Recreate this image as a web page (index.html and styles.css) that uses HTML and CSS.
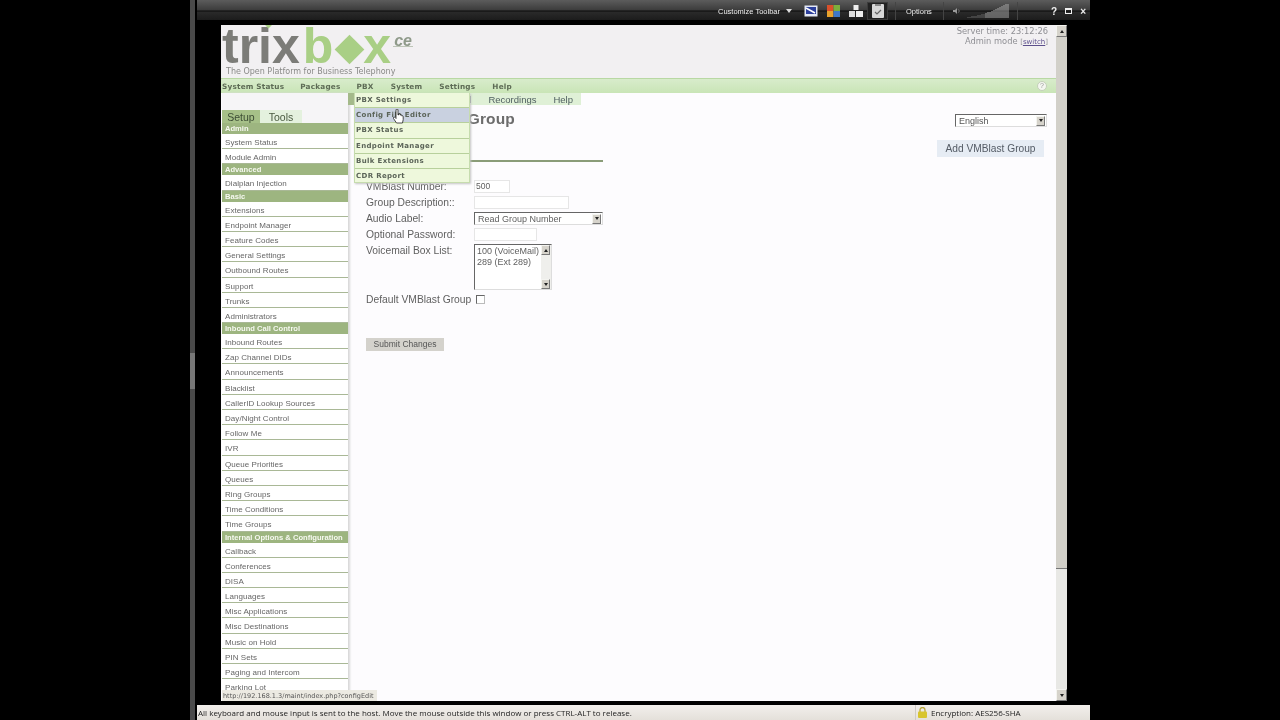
FILE: index.html
```html
<!DOCTYPE html>
<html lang="en">
  <head>
    <meta charset="UTF-8" />
    <title>trixbox CE - VMBlast Group</title>
    <link rel="stylesheet" href="styles.css">
  </head>
  <body>
    <div class="screen">
      <div class="edge"><div class="edge-grip"></div></div>

      <div class="window">
        <div class="toolbar">
          <span class="toolbar-label">Customize Toolbar</span>
          <span class="toolbar-caret"></span>
          <svg class="tool-icon tool-display" width="14" height="12" viewBox="0 0 14 12">
            <rect x="0.5" y="0.5" width="13" height="11" fill="#e4e8f4"></rect>
            <rect x="2" y="2" width="10" height="7" fill="#2c3f9c"></rect>
            <path d="M2 3l9 5" stroke="#fff" stroke-width="1.5"></path>
          </svg>
          <svg class="tool-icon tool-colors" width="13" height="12" viewBox="0 0 13 12">
            <rect width="6.5" height="6" fill="#d9502b"></rect>
            <rect x="6.5" width="6.5" height="6" fill="#7cae3c"></rect>
            <rect y="6" width="6.5" height="6" fill="#e8a22c"></rect>
            <rect x="6.5" y="6" width="6.5" height="6" fill="#3f78c8"></rect>
          </svg>
          <svg class="tool-icon tool-network" width="14" height="12" viewBox="0 0 14 12">
            <rect x="4.5" y="0" width="5" height="5" fill="#eee"></rect>
            <rect x="0" y="6" width="6" height="6" fill="#ddd"></rect>
            <rect x="7" y="6" width="7" height="6" fill="#eee"></rect>
          </svg>
          <span class="tool-box">
            <svg width="12" height="14" viewBox="0 0 12 14">
              <rect width="12" height="14" rx="1" fill="#d8d8d8"></rect>
              <rect x="3" y="0" width="6" height="2" fill="#888"></rect>
              <path d="M3 8l2 2 4-4" fill="none" stroke="#666" stroke-width="1.2"></path>
            </svg>
          </span>
          <span class="toolbar-sep sep-options"></span>
          <span class="toolbar-label label-options">Options</span>
          <span class="toolbar-sep sep-volume"></span>
          <svg class="tool-icon tool-speaker" width="8" height="6" viewBox="0 0 8 6">
            <path d="M0 2h2l2-2v6L2 4H0z" fill="#999"></path>
            <path d="M5.5 1.5q1.5 1.5 0 3" fill="none" stroke="#777"></path>
          </svg>
          <svg class="tool-icon tool-volume" width="42" height="14" viewBox="0 0 42 14">
            <path d="M1 14v-1M3 14v-1M5 14v-2M7 14v-2M9 14v-2M11 14v-3M13 14v-3M15 14v-4M17 14v-4" stroke="#666"></path>
            <path d="M19 14v-5M21 14v-6M23 14v-6M25 14v-7M27 14v-8M29 14v-9M31 14v-10M33 14v-11M35 14v-12M37 14v-13M39 14v-14M41 14v-14" stroke="#a8a8a8"></path>
          </svg>
          <span class="toolbar-sep sep-window"></span>
          <span class="window-buttons">
            <span class="window-help">?</span>
            <span class="window-max"></span>
            <span class="window-close">×</span>
          </span>
        </div>

        <div class="viewport">
          <div class="page">
            <div class="page-main">
              <div class="page-header">
                <div class="brand">
                  <div class="logo">
                    <span class="logo-grey">tri<span class="logo-dot"></span>x</span><span class="logo-green">b<span class="logo-diamond"></span>x</span><span class="logo-ce">ce</span>
                  </div>
                  <div class="tagline">The Open Platform for Business Telephony</div>
                </div>
                <div class="server-info">
                  <div>Server time: 23:12:26</div>
                  <div>Admin mode <span class="switch-wrap">[<a class="switch">switch</a>]</span></div>
                </div>
              </div>

              <div class="nav">
                <span class="nav-item">System Status</span>
                <span class="nav-item">Packages</span>
                <span class="nav-item">PBX</span>
                <span class="nav-item nav-item-wide">System</span>
                <span class="nav-item nav-item-wide">Settings</span>
                <span class="nav-item nav-item-wide">Help</span>
                <span class="nav-help">?</span>
              </div>

              <div class="page-body">
                <div class="sidebar">
                  <div class="tabs">
                    <span class="tab tab-active">Setup</span>
                    <span class="tab">Tools</span>
                  </div>
                  <div class="side-head">Admin</div>
                  <div class="side-item">System Status</div>
                  <div class="side-item">Module Admin</div>
                  <div class="side-head">Advanced</div>
                  <div class="side-item">Dialplan Injection</div>
                  <div class="side-head">Basic</div>
                  <div class="side-item">Extensions</div>
                  <div class="side-item">Endpoint Manager</div>
                  <div class="side-item">Feature Codes</div>
                  <div class="side-item">General Settings</div>
                  <div class="side-item">Outbound Routes</div>
                  <div class="side-item">Support</div>
                  <div class="side-item">Trunks</div>
                  <div class="side-item">Administrators</div>
                  <div class="side-head">Inbound Call Control</div>
                  <div class="side-item">Inbound Routes</div>
                  <div class="side-item">Zap Channel DIDs</div>
                  <div class="side-item">Announcements</div>
                  <div class="side-item">Blacklist</div>
                  <div class="side-item">CallerID Lookup Sources</div>
                  <div class="side-item">Day/Night Control</div>
                  <div class="side-item">Follow Me</div>
                  <div class="side-item">IVR</div>
                  <div class="side-item">Queue Priorities</div>
                  <div class="side-item">Queues</div>
                  <div class="side-item">Ring Groups</div>
                  <div class="side-item">Time Conditions</div>
                  <div class="side-item">Time Groups</div>
                  <div class="side-head">Internal Options &amp; Configuration</div>
                  <div class="side-item">Callback</div>
                  <div class="side-item">Conferences</div>
                  <div class="side-item">DISA</div>
                  <div class="side-item">Languages</div>
                  <div class="side-item">Misc Applications</div>
                  <div class="side-item">Misc Destinations</div>
                  <div class="side-item">Music on Hold</div>
                  <div class="side-item">PIN Sets</div>
                  <div class="side-item">Paging and Intercom</div>
                  <div class="side-item">Parking Lot</div>
                </div>

                <div class="content">
                  <div class="subnav">
                    <span>Operator Panel</span>
                    <span>Recordings</span>
                    <span>Help</span>
                  </div>
                  <div class="content-row">
                    <div class="form-col">
                      <h2 class="form-title">Add VMBlast Group</h2>
                      <div class="form-rule"></div>
                      <div class="form-grid">
                        <label>VMBlast Number:</label>
                        <div class="field field-number">500</div>
                        <label>Group Description::</label>
                        <div class="field field-desc"></div>
                        <label>Audio Label:</label>
                        <div class="select select-audio">
                          <span>Read Group Number</span>
                          <span class="arrow-btn arrow-down"></span>
                        </div>
                        <label>Optional Password:</label>
                        <div class="field field-pass"></div>
                        <label>Voicemail Box List:</label>
                        <div class="listbox">
                          <div class="listbox-items">
                            <div>100 (VoiceMail)</div>
                            <div>289 (Ext 289)</div>
                          </div>
                          <div class="listbox-scroll">
                            <span class="arrow-btn arrow-up"></span>
                            <span class="arrow-btn arrow-down"></span>
                          </div>
                        </div>
                        <label>Default VMBlast Group</label>
                        <div class="checkbox"></div>
                      </div>
                      <button class="submit-button">Submit Changes</button>
                    </div>
                    <div class="side-col">
                      <div class="select select-lang">
                        <span>English</span>
                        <span class="arrow-btn arrow-down"></span>
                      </div>
                      <div class="add-button">Add VMBlast Group</div>
                    </div>
                  </div>
                </div>
              </div>

              <div class="menu">
                <div class="menu-item">PBX Settings</div>
                <div class="menu-item menu-hover">Config File Editor</div>
                <div class="menu-item">PBX Status</div>
                <div class="menu-item">Endpoint Manager</div>
                <div class="menu-item">Bulk Extensions</div>
                <div class="menu-item">CDR Report</div>
              </div>

              <svg class="hand-cursor" width="11" height="15" viewBox="0 0 11 15">
                <path d="M3 1a1 1 0 0 1 2 0v5h.5V5a1 1 0 0 1 1.5 0v1h.3a1 1 0 0 1 1.5.3V7a.9.9 0 0 1 1.4.6v3L9.500 14H3.500L.5 9.500q-.5-1.500 1-1.500L3 9.500z" fill="#fff" stroke="#222" stroke-width="0.8"></path>
              </svg>

              <div class="link-tip">http://192.168.1.3/maint/index.php?configEdit</div>
            </div>

            <div class="scrollbar">
              <span class="arrow-btn arrow-up scroll-end"></span>
              <div class="scroll-thumb"></div>
              <div class="scroll-track"></div>
              <span class="arrow-btn arrow-down scroll-end"></span>
            </div>
          </div>
        </div>

        <div class="statusbar">
          <span class="status-text">All keyboard and mouse input is sent to the host. Move the mouse outside this window or press CTRL-ALT to release.</span>
          <span class="status-secure">
            <svg width="9" height="11" viewBox="0 0 9 11">
              <path d="M2 5V3a2.500 2.500 0 0 1 5 0v2" fill="none" stroke="#b9a83a" stroke-width="1.300"></path>
              <rect y="4.500" width="9" height="6.500" rx="1" fill="#d8c52e"></rect>
            </svg>
            Encryption: AES256-SHA
          </span>
        </div>
      </div>
    </div>
  </body>
</html>
```

FILE: styles.css
```css
:root {
  --green-dark: #9db580;
  --green-line: #a9b896;
  --green-light: #dff0d6;
  --text-grey: #5f5f5f;
  --page-bg: #fdfcfe;
  --scroll-face: #d6d3cb;
}

* {
  margin: 0;
  padding: 0;
  box-sizing: border-box;
}

body {
  background-color: #000;
  font-family: "Liberation Sans", Arial, sans-serif;
  color: var(--text-grey);
  overflow: hidden;
}

.screen {
  width: 900px;
  height: 720px;
  margin-left: 190px;
  display: flex;
  filter: blur(0.35px);
}

.edge {
  width: 7px;
  flex-shrink: 0;
  display: flex;
  align-items: center;
  padding-right: 2px;
  background-color: #000;
}

.edge-grip {
  width: 5px;
  height: 720px;
  background: linear-gradient(#4a4a4a 0, #4a4a4a 49%, #777 49%, #777 54%, #4a4a4a 54%);
}

.window {
  flex: 1;
  min-width: 0;
  display: flex;
  flex-direction: column;
}

/* Top toolbar */
.toolbar {
  height: 20px;
  flex-shrink: 0;
  display: flex;
  align-items: center;
  background: linear-gradient(#5c5c5c 0, #3c3c3c 10px, #0a0a0a 11px, #2a2a2a 12px, #1c1c1c 20px);
  padding-left: 521px;
  padding-top: 2px;
  color: #eee;
  position: relative;
}

.toolbar-label {
  width: 62px;
  font-family: "Liberation Sans", sans-serif;
  font-size: 7.500px;
  white-space: nowrap;
}

.toolbar-caret {
  margin-left: 6px;
  border-left: 3px solid transparent;
  border-right: 3px solid transparent;
  border-top: 4px solid #ddd;
}

.tool-display { margin-left: 12px; }
.tool-colors { margin-left: 9px; }
.tool-network { margin-left: 9px; }

.tool-box {
  margin-left: 4px;
  width: 21px;
  height: 18px;
  display: flex;
  align-items: center;
  justify-content: center;
  background-color: #222;
  border: 1px solid #3c3c3c;
}

.toolbar-sep {
  width: 1px;
  height: 18px;
  background-color: #444;
}

.sep-options { margin-left: 7px; }
.toolbar-label.label-options { margin-left: 10px; width: 26px; }
.sep-volume { margin-left: 11px; }
.tool-speaker { margin-left: 9px; }
.tool-volume { margin-left: 6px; }
.sep-window { margin-left: 8px; }

.window-buttons {
  margin-left: auto;
  margin-right: 4px;
  display: flex;
  align-items: center;
  gap: 8px;
  font-size: 10px;
  font-weight: 700;
}

.window-max {
  width: 7px;
  height: 6px;
  border: 1px solid #eee;
  border-top-width: 2px;
}

/* Remote desktop area */
.viewport {
  flex: 1;
  min-height: 0;
  padding: 5px 23px 4px 24px;
  background-color: #000;
}

.page {
  height: 100%;
  display: flex;
}

.page-main {
  flex: 1;
  min-width: 0;
  position: relative;
  overflow: hidden;
  display: flex;
  flex-direction: column;
  background-color: var(--page-bg);
}

.page-header {
  height: 53px;
  flex-shrink: 0;
  display: flex;
  justify-content: space-between;
  background-color: #f2f0f2;
  padding: 0 8px 0 1px;
}

.logo {
  height: 42px;
  padding-top: 1px;
  font-size: 50px;
  line-height: 41px;
  font-weight: 700;
  white-space: nowrap;
}

.logo-grey {
  color: #7c7c78;
  position: relative;
}

.logo-dot {
  position: absolute;
  left: 43px;
  top: 2px;
  width: 7px;
  height: 7px;
  background-color: #a9cf85;
  transform: rotate(45deg);
}

.logo-green {
  color: #a9cf85;
  margin-left: 3px;
}

.logo-diamond {
  display: inline-block;
  width: 21px;
  height: 21px;
  margin: 0 3px 3px 6px;
  background-color: #a9cf85;
  transform: rotate(45deg);
}

.logo-ce {
  display: inline-block;
  vertical-align: 17px;
  margin-left: 2px;
  padding: 0 1px;
  font-size: 16px;
  line-height: 10px;
  font-style: italic;
  color: #8f9a8a;
  border-bottom: 1px solid #bcc4b6;
}

.tagline {
  margin: 0 0 0 4px;
  font-family: "DejaVu Sans", sans-serif;
  font-size: 8px;
  line-height: 10px;
  color: #8a8a88;
  white-space: nowrap;
}

.server-info {
  padding-top: 2px;
  text-align: right;
  font-family: "DejaVu Sans", sans-serif;
  font-size: 8.300px;
  line-height: 9.500px;
  color: #8f8f94;
}

.switch-wrap {
  font-size: 7px;
}

.switch {
  color: #5c4f8c;
  text-decoration: underline;
}

/* Main menu */
.nav {
  height: 15px;
  flex-shrink: 0;
  display: flex;
  align-items: center;
  gap: 16px;
  padding: 0 9px 0 1px;
  background: linear-gradient(#d8eccb, #c9e5b6);
  border-top: 1px solid #b9d8a4;
}

.nav-item {
  font-family: "DejaVu Sans", sans-serif;
  font-size: 7.300px;
  font-weight: 700;
  letter-spacing: 0.2px;
  color: #5d6b55;
  white-space: nowrap;
}

.nav-item-wide {
  margin-left: 1px;
}

.nav-help {
  margin-left: auto;
  width: 10px;
  height: 10px;
  border-radius: 50%;
  background-color: #f4f6f0;
  border: 1px solid #c4d0ba;
  font-size: 7px;
  line-height: 8px;
  text-align: center;
  color: #999;
}

.page-body {
  flex: 1;
  min-height: 0;
  display: flex;
}

/* Left module list */
.sidebar {
  width: 126px;
  margin-left: 1px;
  flex-shrink: 0;
  padding-top: 17px;
  background-color: #f6f5f7;
  box-shadow: 2px 0 2px #d8d8d8;
}

.tabs {
  display: flex;
  height: 13px;
  font-size: 10.500px;
  line-height: 14px;
  color: #4a5a40;
}

.tab {
  width: 42px;
  text-align: center;
  background-color: #e4f1de;
}

.tab-active {
  width: 38px;
  background-color: #a6c088;
  color: #3c4c34;
}

.side-head {
  height: 11px;
  padding-left: 3px;
  background-color: var(--green-dark);
  color: #f6f8f0;
  font-size: 7.600px;
  font-weight: 700;
  line-height: 12px;
  white-space: nowrap;
}

.side-item {
  height: 15.200px;
  padding-left: 3px;
  background-color: #fff;
  border-bottom: 1px solid var(--green-line);
  color: #666;
  font-size: 8px;
  line-height: 17px;
  letter-spacing: 0.05px;
  white-space: nowrap;
}

/* Content area */
.content {
  flex: 1;
  min-width: 0;
}

.subnav {
  width: 233px;
  height: 12px;
  display: flex;
  justify-content: flex-end;
  gap: 17px;
  padding-right: 8px;
  background: linear-gradient(90deg, #a4b98a 6px, var(--green-light) 6px);
  font-size: 9.500px;
  line-height: 13px;
  color: #4f5f60;
}

.content-row {
  display: flex;
  justify-content: space-between;
  padding: 0 9px 0 18px;
}

.form-title {
  margin-top: 5px;
  font-size: 15.500px;
  line-height: 18px;
  font-weight: 700;
  letter-spacing: 0.15px;
  color: #6c6c6c;
  white-space: nowrap;
}

.form-rule {
  width: 237px;
  height: 2px;
  margin-top: 32px;
  background-color: #8a9c78;
}

.form-grid {
  margin-top: 18px;
  display: grid;
  grid-template-columns: 108px auto;
  row-gap: 3px;
  justify-items: start;
  align-items: center;
}

.form-grid label {
  font-size: 10.300px;
  line-height: 13px;
  color: #5f5f5f;
  white-space: nowrap;
  align-self: start;
}

.field {
  height: 13px;
  background-color: #fff;
  border: 1px solid #e6e6e6;
  font-size: 8.500px;
  line-height: 11px;
  padding-left: 1px;
}

.field-number { width: 36px; }
.field-desc { width: 95px; }
.field-pass { width: 63px; }

.select {
  display: flex;
  justify-content: space-between;
  align-items: center;
  height: 13px;
  background-color: #fff;
  border: 1px solid;
  border-color: #666 #ddd #ddd #666;
  font-size: 9px;
  padding: 0 1px 0 3px;
}

.select-audio { width: 129px; }

.select-lang {
  width: 92px;
  color: #555;
}

.arrow-btn {
  width: 9px;
  height: 10px;
  flex-shrink: 0;
  display: flex;
  align-items: center;
  justify-content: center;
  background-color: var(--scroll-face);
  border: 1px solid;
  border-color: #f4f4f0 #777 #777 #f4f4f0;
}

.arrow-up::before,
.arrow-down::before {
  content: "";
  border-left: 2.500px solid transparent;
  border-right: 2.500px solid transparent;
}

.arrow-up::before { border-bottom: 3px solid #222; }
.arrow-down::before { border-top: 3px solid #222; }

.listbox {
  width: 78px;
  height: 46px;
  display: flex;
  justify-content: space-between;
  background-color: #fff;
  border: 1px solid;
  border-color: #666 #ddd #ddd #666;
}

.listbox-items {
  padding: 1px 0 0 2px;
  font-size: 9px;
  line-height: 10.500px;
  white-space: nowrap;
}

.listbox-scroll {
  width: 10px;
  display: flex;
  flex-direction: column;
  justify-content: space-between;
  background-color: #efefec;
}

.checkbox {
  width: 9px;
  height: 9px;
  margin-left: 2px;
  background-color: #fff;
  border: 1px solid #666;
  border-right-color: #bbb;
  border-bottom-color: #bbb;
}

.submit-button {
  display: block;
  width: 78px;
  height: 13px;
  margin-top: 31.500px;
  background-color: #d4d2cc;
  border: none;
  font-family: "Liberation Sans", sans-serif;
  font-size: 8.500px;
  color: #555;
}

.side-col {
  display: flex;
  flex-direction: column;
  align-items: flex-end;
  padding-top: 9px;
}

.add-button {
  width: 107px;
  height: 17px;
  margin: 13px 3px 0 0;
  background-color: #e6ecf4;
  font-size: 10.200px;
  line-height: 18px;
  text-align: center;
  color: #555c66;
}

/* Open PBX dropdown */
.menu {
  position: absolute;
  left: 133px;
  top: 68px;
  width: 116px;
  box-shadow: 1px 1px 2px #c4c4c4;
  border: 1px solid #c6dcae;
  border-top: none;
}

.menu-item {
  height: 15.200px;
  padding-left: 1px;
  background-color: #eef8dc;
  border-bottom: 1px solid #b8d09c;
  font-family: "DejaVu Sans", sans-serif;
  font-size: 7px;
  font-weight: 700;
  letter-spacing: 0.35px;
  line-height: 15px;
  color: #5b6458;
  white-space: nowrap;
}

.menu-item:last-child {
  height: 13.500px;
  border-bottom: none;
}

.menu-hover {
  background-color: #c9d1e0;
}

.hand-cursor {
  position: absolute;
  left: 172px;
  top: 84px;
}

.link-tip {
  position: absolute;
  left: 1px;
  bottom: 0;
  height: 11px;
  padding: 0 3px 0 1px;
  background-color: #eceae2;
  font-family: "DejaVu Sans", sans-serif;
  font-size: 6.500px;
  line-height: 12px;
  color: #555;
  white-space: nowrap;
}

/* Page scrollbar */
.scrollbar {
  width: 11px;
  flex-shrink: 0;
  display: flex;
  flex-direction: column;
}

.scroll-end {
  width: 11px;
  height: 12px;
}

.scroll-thumb {
  height: 532px;
  background-color: #d2d0c9;
  border-bottom: 1px solid #777;
}

.scroll-track {
  flex: 1;
  background-color: #e8e8e5;
}

/* Bottom status bar */
.statusbar {
  height: 15px;
  flex-shrink: 0;
  display: flex;
  align-items: center;
  background: linear-gradient(#f2efec, #e4e0da);
  padding-left: 1px;
  font-family: "Open Sans", sans-serif;
  font-size: 8px;
  color: #222;
}

.status-text {
  width: 717px;
  white-space: nowrap;
}

.status-secure {
  height: 100%;
  display: flex;
  align-items: center;
  gap: 4px;
  padding-left: 2px;
  border-left: 1px solid #cfcbc4;
  white-space: nowrap;
}
```
